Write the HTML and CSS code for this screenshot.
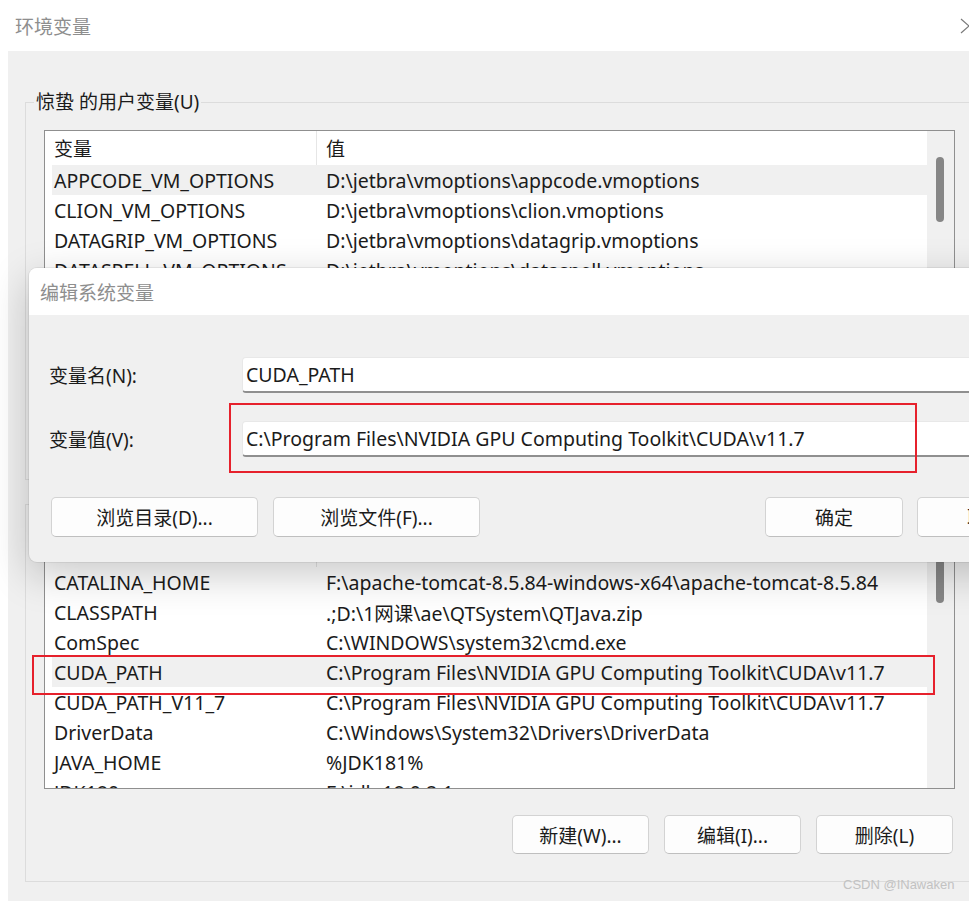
FILE: index.html
```html
<!DOCTYPE html>
<html>
<head>
    <meta charset="utf-8">
    <link rel="stylesheet" href="styles.css">
</head>
<body>
    <div class="window">
        <div class="titlebar">
            <span class="title">环境变量</span>
            <svg class="close" width="20" height="16" viewBox="0 0 20 16">
                <path d="M2 1 L18 15 M18 1 L2 15" stroke="#7a7a7a" stroke-width="1.2" fill="none"/>
            </svg>
        </div>

        <div class="client">
            <fieldset class="group">
                <legend>惊蛰 的用户变量(U)</legend>
                <div class="list">
                    <div class="rows">
                        <div class="head"><span>变量</span><span>值</span></div>
                        <div class="row hl"><span class="name">APPCODE_VM_OPTIONS</span><span class="value">D:\jetbra\vmoptions\appcode.vmoptions</span></div>
                        <div class="row"><span class="name">CLION_VM_OPTIONS</span><span class="value">D:\jetbra\vmoptions\clion.vmoptions</span></div>
                        <div class="row"><span class="name">DATAGRIP_VM_OPTIONS</span><span class="value">D:\jetbra\vmoptions\datagrip.vmoptions</span></div>
                        <div class="row"><span class="name">DATASPELL_VM_OPTIONS</span><span class="value">D:\jetbra\vmoptions\dataspell.vmoptions</span></div>
                        <div class="row"><span class="name">GATEWAY_VM_OPTIONS</span><span class="value">D:\jetbra\vmoptions\gateway.vmoptions</span></div>
                        <div class="row"><span class="name">GOLAND_VM_OPTIONS</span><span class="value">D:\jetbra\vmoptions\goland.vmoptions</span></div>
                        <div class="row"><span class="name">IDEA_VM_OPTIONS</span><span class="value">D:\jetbra\vmoptions\idea.vmoptions</span></div>
                    </div>
                    <div class="scroll"><div class="thumb"></div></div>
                </div>
                <div class="buttons">
                    <button class="btn">新建(N)...</button>
                    <button class="btn">编辑(E)...</button>
                    <button class="btn">删除(D)</button>
                </div>
            </fieldset>

            <fieldset class="group">
                <legend>系统变量(S)</legend>
                <div class="list">
                    <div class="rows">
                        <div class="head"><span>变量</span><span>值</span></div>
                        <div class="row"><span class="name">CATALINA_HOME</span><span class="value">F:\apache-tomcat-8.5.84-windows-x64\apache-tomcat-8.5.84</span></div>
                        <div class="row"><span class="name">CLASSPATH</span><span class="value">.;D:\1网课\ae\QTSystem\QTJava.zip</span></div>
                        <div class="row"><span class="name">ComSpec</span><span class="value">C:\WINDOWS\system32\cmd.exe</span></div>
                        <div class="row hl"><span class="name">CUDA_PATH</span><span class="value">C:\Program Files\NVIDIA GPU Computing Toolkit\CUDA\v11.7</span></div>
                        <div class="row"><span class="name">CUDA_PATH_V11_7</span><span class="value">C:\Program Files\NVIDIA GPU Computing Toolkit\CUDA\v11.7</span></div>
                        <div class="row"><span class="name">DriverData</span><span class="value">C:\Windows\System32\Drivers\DriverData</span></div>
                        <div class="row"><span class="name">JAVA_HOME</span><span class="value">%JDK181%</span></div>
                        <div class="row"><span class="name">JDK180</span><span class="value">F:\jdk-18.0.2.1</span></div>
                    </div>
                    <div class="scroll"><div class="thumb short"></div></div>
                    <!-- red note round the CUDA_PATH row -->
                    <div class="mark row-mark"></div>
                </div>
                <div class="buttons">
                    <button class="btn">新建(W)...</button>
                    <button class="btn">编辑(I)...</button>
                    <button class="btn">删除(L)</button>
                </div>
            </fieldset>
        </div>
    </div>

    <div class="dialog">
        <div class="dlg-title">编辑系统变量</div>
        <div class="dlg-body">
            <div class="field">
                <label>变量名(N):</label>
                <div class="input">CUDA_PATH</div>
            </div>
            <div class="field">
                <label>变量值(V):</label>
                <div class="input">C:\Program Files\NVIDIA GPU Computing Toolkit\CUDA\v11.7</div>
                <div class="mark field-mark"></div>
            </div>
            <div class="dlg-buttons">
                <div class="btn-group">
                    <button class="btn wide">浏览目录(D)...</button>
                    <button class="btn wide">浏览文件(F)...</button>
                </div>
                <div class="btn-group">
                    <button class="btn mid">确定</button>
                    <button class="btn mid">取消</button>
                </div>
            </div>
        </div>
    </div>

    <div class="watermark">CSDN @INawaken</div>
</body>
</html>
```

FILE: styles.css
```css
* {
    padding: 0px;
    margin: 0px;
    box-sizing: border-box;
}

html,
body {
    overflow: hidden;
}

body {
    position: relative;
    width: 969px;
    height: 901px;
    background-color: #fff;
    font-family: "Noto Sans", "Noto Sans CJK SC", sans-serif;
    color: #1b1b1b;
}

.window {
    margin-left: 8px;
    width: 990px;
}

.titlebar {
    height: 51px;
    display: flex;
    align-items: center;
    justify-content: space-between;
    padding: 0 19px 0 7px;
    background-color: #fff;
}

.titlebar .title {
    font-size: 19px;
    color: #8e8e8e;
}

.client {
    height: 850px;
    background-color: #f0f0f0;
    padding: 39px 17px 0;
}

.group {
    border: 1px solid #dcdcdc;
    padding: 0 25px 27px 18px;
}

.group + .group {
    margin-top: 12px;
}

.group legend {
    font-size: 19px;
    line-height: 24px;
    margin-left: -10px;
    padding: 0 2px;
}

.list {
    position: relative;
    display: flex;
    height: 257px;
    margin-top: 16px;
    border: 1px solid #8f8f8f;
    background-color: #fff;
}

.rows {
    flex: 1;
    overflow: hidden;
}

.head {
    display: flex;
    height: 34px;
    font-size: 19px;
}

.head span {
    display: flex;
    align-items: center;
    padding-left: 9px;
}

.head span:first-child {
    width: 272px;
    border-right: 1px solid #e6e6e6;
}

.row {
    display: flex;
    align-items: center;
    height: 30px;
    margin-left: 7px;
    font-size: 19.5px;
    white-space: nowrap;
}

.row.hl {
    background-color: #f0f0f0;
}

.row .name {
    width: 265px;
    padding-left: 2px;
}

.row .value {
    padding-left: 9px;
}

.scroll {
    width: 27px;
    padding: 26px 0 0 9px;
    background-color: #f0f0f0;
}

.thumb {
    width: 8px;
    height: 65px;
    border-radius: 4px;
    background-color: #868686;
}

.thumb.short {
    height: 44px;
}

.buttons {
    display: flex;
    justify-content: flex-end;
    gap: 15px;
    margin-top: 26px;
    padding-right: 2px;
}

.btn {
    width: 137px;
    height: 39px;
    background-color: #fdfdfd;
    border: 1px solid #d3d3d3;
    border-bottom-color: #bfbfbf;
    border-radius: 5px;
    font-family: inherit;
    font-size: 19px;
    color: #1b1b1b;
}

/* red notes drawn on the screenshot */
.mark {
    position: absolute;
    border: 2px solid #e6212c;
}

.row-mark {
    left: -13px;
    top: 122px;
    width: 903px;
    height: 40px;
}

.field-mark {
    left: 180px;
    top: -18px;
    width: 688px;
    height: 70px;
}

.dialog {
    position: absolute;
    left: 29px;
    top: 268px;
    width: 1048px;
    border-radius: 8px;
    overflow: hidden;
    background-color: #f0f0f0;
    box-shadow: 0 12px 40px rgba(0, 0, 0, 0.22), 0 0 0 1px rgba(0, 0, 0, 0.06);
}

.dlg-title {
    height: 47px;
    display: flex;
    align-items: center;
    padding-left: 11px;
    background-color: #fff;
    font-size: 19px;
    color: #8e8e8e;
}

.dlg-body {
    padding: 42px 20px 25px;
}

.field {
    position: relative;
    display: flex;
    align-items: center;
}

.field + .field {
    margin-top: 28px;
}

.field label {
    width: 193px;
    font-size: 19px;
}

.field .input {
    flex: 1;
    height: 36px;
    display: flex;
    align-items: center;
    padding-left: 3px;
    background-color: #fff;
    border: 1px solid #e8e8e8;
    border-bottom: 2px solid #8f8f8f;
    border-radius: 4px;
    font-size: 19.5px;
    white-space: nowrap;
}

.dlg-buttons {
    display: flex;
    justify-content: space-between;
    margin-top: 40px;
    padding: 0 2px;
}

.btn-group {
    display: flex;
    gap: 14px;
}

.btn-group:first-child {
    gap: 15px;
}

.btn.wide {
    width: 207px;
    height: 40px;
}

.btn.mid {
    width: 138px;
    height: 40px;
}

.watermark {
    position: absolute;
    left: 843px;
    top: 877px;
    font-family: "Liberation Sans", sans-serif;
    font-size: 13px;
    color: #c2c2c2;
}
```
